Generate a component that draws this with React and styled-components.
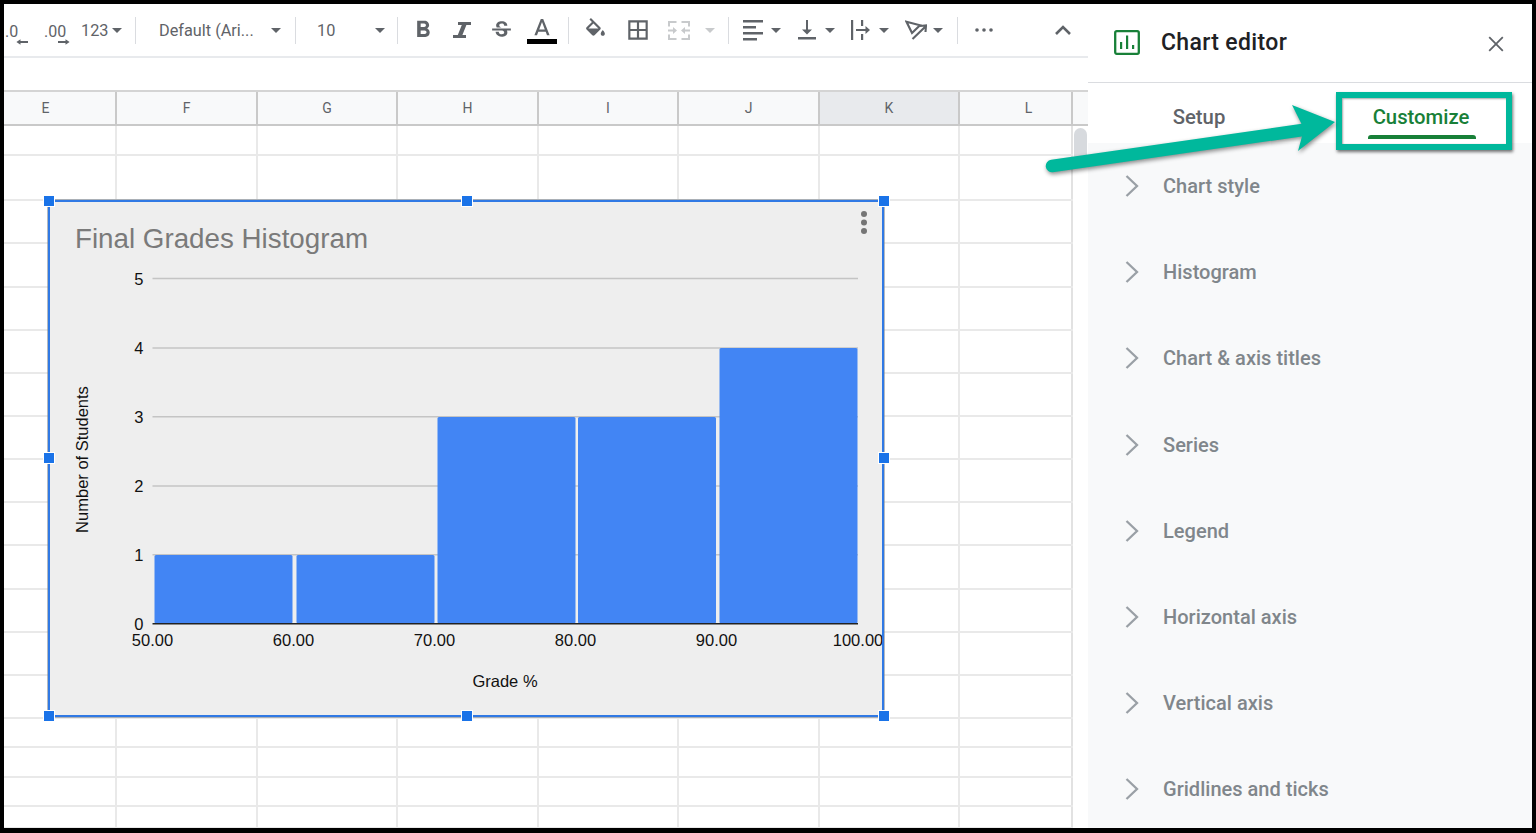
import React from 'react';
import styled, { createGlobalStyle } from 'styled-components';

const Global = createGlobalStyle`
  html, body { margin: 0; padding: 0; background: #000; }
  * { box-sizing: border-box; }
`;

const Frame = styled.div`
  position: relative;
  width: 1536px;
  height: 833px;
  padding: 4px 4px 5px 4px;
  background: #000;
  overflow: hidden;
`;
const Window = styled.div`
  display: flex;
  width: 100%;
  height: 100%;
  background: #fff;
  overflow: hidden;
`;
const Sheet = styled.div`
  flex: 0 0 1084px;
  display: flex;
  flex-direction: column;
  min-width: 0;
`;
const Toolbar = styled.div`
  flex: 0 0 54px;
  display: flex;
  align-items: center;
  border-bottom: 2px solid #e8eaed;
  color: #5f6368;
  font-family: Roboto, "Liberation Sans", sans-serif;
`;
const Slot = styled.div`
  flex: 0 0 ${p => p.$w}px;
  height: 36px;
  margin-left: ${p => p.$ml || 0}px;
  padding-left: ${p => p.$pl || 0}px;
  padding-right: ${p => p.$pr || 0}px;
  display: flex;
  align-items: center;
  justify-content: ${p => (p.$center ? 'center' : 'flex-start')};
  font-size: 16.3px;
  color: #5f6368;
  svg { display: block; flex: none; fill: currentColor; }
`;
const DecText = styled.text`
  font-family: Roboto, "Liberation Sans", sans-serif;
  font-size: 16px;
  fill: #5f6368;
`;
const Separator = styled.div`
  flex: 0 0 1px;
  height: 27px;
  background: #dadce0;
`;
const Caret = styled.span`
  flex: none;
  width: 0;
  height: 0;
  margin-left: ${p => (p.$push ? 'auto' : `${p.$ml || 0}px`)};
  border-left: 5.5px solid transparent;
  border-right: 5.5px solid transparent;
  border-top: 5.5px solid ${p => (p.$muted ? '#c8cacc' : '#5f6368')};
`;
const Swatch = styled.span`
  display: block;
  width: 30px;
  height: 5px;
  background: #000;
  margin-top: 0;
`;
const ColorTool = styled.div`
  display: flex;
  flex-direction: column;
  align-items: center;
`;
const FormulaBar = styled.div`
  flex: 0 0 34px;
  border-bottom: 2px solid #d4d4d4;
`;
const Header = styled.div`
  flex: 0 0 34px;
  display: flex;
  background: #f8f9fa;
  border-bottom: 2px solid #c9c9c9;
`;
const HeadCell = styled.div`
  flex: 0 0 ${p => p.$w}px;
  display: flex;
  align-items: center;
  justify-content: center;
  padding-left: ${p => p.$pl || 0}px;
  padding-right: ${p => p.$pr || 0}px;
  border-right: 2px solid #c9c9c9;
  background: ${p => (p.$active ? '#e8eaed' : 'transparent')};
  color: #5f6368;
  font: 400 14px Roboto, "Liberation Sans", sans-serif;
`;
const Body = styled.div`
  position: relative;
  flex: 1;
  display: flex;
  min-height: 0;
  overflow: hidden;
`;
const Cells = styled.div`
  flex: 0 0 1069px;
  display: flex;
  flex-direction: column;
`;
const Row = styled.div`
  flex: 0 0 ${p => p.$h}px;
  display: flex;
  border-bottom: 2px solid #e9e9e9;
`;
const Cell = styled.div`
  flex: 0 0 ${p => p.$w}px;
  border-right: 2px solid ${p => (p.$last ? '#e2e2e2' : '#e9e9e9')};
`;
const Gutter = styled.div`
  flex: 1;
  padding: 2px 1px 0 1px;
`;
const Thumb = styled.div`
  width: 13px;
  height: 34px;
  border-radius: 7px;
  background: #d7dade;
`;
const Chart = styled.div`
  position: absolute;
  left: 44px;
  top: 74px;
  width: 836px;
  height: 517px;
  border: 2px solid #3079e4;
  box-shadow: 0 0 0 1px rgba(120, 130, 140, .55);
  background: #eee;
  svg { display: block; }
`;
const Handle = styled.span`
  position: absolute;
  left: ${p => p.$x}px;
  top: ${p => p.$y}px;
  width: 12px;
  height: 12px;
  transform: translate(-50%, -50%);
  background: #1a73e8;
  border: 1px solid #fff;
`;
const ChartTitle = styled.text`
  font-family: "Liberation Sans", Arial, sans-serif;
  font-size: 27.75px;
  fill: #7a7a7a;
`;
const AxisText = styled.text`
  font-family: "Liberation Sans", Arial, sans-serif;
  font-size: 16.5px;
  fill: #111;
  text-anchor: ${p => p.$anchor || 'middle'};
`;
const Panel = styled.aside`
  flex: 1;
  display: flex;
  flex-direction: column;
  background: #fff;
  min-width: 0;
`;
const PanelHead = styled.div`
  flex: 0 0 79px;
  display: flex;
  align-items: center;
  padding: 0 28px 2px 26px;
  border-bottom: 1px solid #dadce0;
`;
const PanelTitle = styled.div`
  margin-left: 21px;
  font: 500 23px Roboto, "Liberation Sans", sans-serif;
  letter-spacing: .35px;
  color: #202124;
`;
const Close = styled.div`
  margin-left: auto;
  height: 16px;
  position: relative;
  top: 2px;
  svg { display: block; }
`;
const Tabs = styled.div`
  flex: 0 0 60px;
  display: grid;
  grid-template-columns: 1fr 1fr;
`;
const Tab = styled.div`
  position: relative;
  display: flex;
  align-items: center;
  justify-content: center;
  padding-top: 8px;
  font: 500 20.3px Roboto, "Liberation Sans", sans-serif;
  color: ${p => (p.$active ? '#188038' : '#5f6368')};
  ${p => p.$active && `
    &::after {
      content: '';
      position: absolute;
      left: 58px;
      right: 56px;
      bottom: 4px;
      height: 4px;
      border-radius: 3px 3px 0 0;
      background: #188038;
    }
  `}
`;
const Sections = styled.div`
  flex: 1;
  background: #f8f9fa;
  overflow: hidden;
`;
const Section = styled.div`
  height: 86.2px;
  display: flex;
  align-items: center;
  padding-left: 37px;
  svg { display: block; flex: none; }
`;
const SectionLabel = styled.span`
  margin-left: 24px;
  font: 500 20px Roboto, "Liberation Sans", sans-serif;
  letter-spacing: .02px;
  color: #80868b;
`;
const Callout = styled.div`
  position: absolute;
  left: 1336px;
  top: 92px;
  width: 176px;
  height: 58px;
  border: 6px solid #00b89c;
  box-shadow: 1px 2px 3px rgba(0, 0, 0, .55), inset 1px 1px 2px rgba(0, 0, 0, .35);
`;
const Arrow = styled.svg`
  position: absolute;
  left: 1040px;
  top: 95px;
  overflow: visible;
  filter: drop-shadow(1px 2px 2px rgba(0, 0, 0, .45));
`;

const cols = [
  ['E', 113, 0, 28], ['F', 141], ['G', 140], ['H', 141],
  ['I', 140], ['J', 141], ['K', 140], ['L', 113, 26, 0],
];
const rows = [30, 45, 43, 44, 43, 43, 43, 43, 43, 43, 44, 43, 43, 43, 29, 30, 29, 22];
const sections = ['Chart style', 'Histogram', 'Chart & axis titles', 'Series', 'Legend', 'Horizontal axis', 'Vertical axis', 'Gridlines and ticks'];
const handles = [[-1, -1], [417, -1], [834, -1], [-1, 256], [834, 256], [-1, 514], [417, 514], [834, 514]];
const bars = [[154.5, 138, 555], [296.5, 138, 555], [437.5, 138, 417], [578, 138, 417], [719.5, 138, 348]];
const gridY = [[5, 278.5], [4, 348], [3, 416.7], [2, 486], [1, 554.8]];
const xLabels = [['50.00', 152.5], ['60.00', 293.5], ['70.00', 434.5], ['80.00', 575.5], ['90.00', 716.5], ['100.00', 858]];

const Icon = ({ w, h, vb, d }) => (
  <svg width={w} height={h} viewBox={vb || '0 0 24 24'}><path d={d} /></svg>
);

const DecDown = () => (
  <svg width="30" height="36" viewBox="0 0 30 36">
    <DecText x="1" y="25">.0</DecText>
    <path d="M24 29.1H16.5V27.2L12.4 30 16.5 32.8V30.9H24z" />
  </svg>
);
const DecUp = () => (
  <svg width="40" height="36" viewBox="0 0 40 36">
    <DecText x="10" y="25">.00</DecText>
    <path d="M24 29.1H31.5V27.2L35.6 30 31.5 32.8V30.9H24z" />
  </svg>
);
const Merge = () => (
  <svg width="22" height="19" viewBox="0 0 22 19" style={{ fill: '#c8cacc' }}>
    <path d="M0 0h8.5v2H2v3.5H0zM13.5 0H22v5.5h-2V2h-6.5zM0 13.5h2V17h6.5v2H0zM20 13.5h2V19h-8.5v-2H20z" />
    <path d="M0 8.5h5V6l4 3.5-4 3.5v-2.5H0zM22 8.5h-5V6l-4 3.5 4 3.5v-2.5h5z" />
  </svg>
);
const AlignLeft = () => (
  <svg width="20" height="21" viewBox="0 0 20 21">
    <path d="M0 0h20v2.5H0zM0 6h13v2.5H0zM0 12h20v2.5H0zM0 18h14v2.5H0z" />
  </svg>
);
const VAlign = () => (
  <svg width="18" height="20" viewBox="0 0 18 20">
    <path d="M0 17h18v2.5H0zM8 0h2v9.5h4L9 14.5 4 9.5h4z" />
  </svg>
);
const Wrap = () => (
  <svg width="19" height="20" viewBox="0 0 19 20">
    <path d="M0 0h2.2v20H0zM10 0h2.2v6H10zM10 14h2.2v6H10zM5 9h9.5V6l4.5 4-4.5 4v-3H5z" />
  </svg>
);
const Rotate = () => (
  <svg width="22" height="20" viewBox="0 0 22 20" style={{ fill: 'none', stroke: '#5f6368', strokeWidth: 2.1 }}>
    <path d="M1.5 1.8 15 5.2 7 13z" />
    <path d="M7.5 19 20.5 6.5M15 6 21 5.5 20.5 12" />
  </svg>
);
const More = () => (
  <svg width="18" height="6" viewBox="0 0 18 6">
    <circle cx="2" cy="3" r="1.8" /><circle cx="9" cy="3" r="1.8" /><circle cx="16" cy="3" r="1.8" />
  </svg>
);
const ChevronUp = () => (
  <svg width="16" height="10" viewBox="0 0 16 10" style={{ fill: 'none', stroke: '#5f6368', strokeWidth: 2.6 }}>
    <path d="M1 9 8 2l7 7" />
  </svg>
);
const ChartIcon = () => (
  <svg width="26" height="25" viewBox="0 0 26 25" style={{ display: 'block', flex: 'none' }}>
    <rect x="1.2" y="1.2" width="23.6" height="22.6" rx="1.5" fill="none" stroke="#188038" strokeWidth="2.3" />
    <path fill="#188038" d="M6 12h2.2v7H6zM12 5.5h2.2V19H12zM18 15h2.2v4H18z" />
  </svg>
);
const CloseIcon = () => (
  <svg width="16" height="16" viewBox="0 0 16 16" fill="none" stroke="#5f6368" strokeWidth="1.8">
    <path d="M1.2 1.2l13.6 13.6M14.8 1.2 1.2 14.8" />
  </svg>
);
const Chevron = () => (
  <svg width="14" height="24" viewBox="0 0 14 24" fill="none" stroke="#9aa0a6" strokeWidth="2.3">
    <path d="M1.5 2l10.5 10L1.5 22" />
  </svg>
);

const HistogramPlot = () => (
  <svg width="832" height="513" viewBox="50 202 832 513">
    <ChartTitle x="75" y="248">Final Grades Histogram</ChartTitle>
    <g fill="#757575">
      <circle cx="864" cy="214" r="3" />
      <circle cx="864" cy="222.5" r="3" />
      <circle cx="864" cy="231" r="3" />
    </g>
    {gridY.map(([n, y]) => (
      <g key={n}>
        <line x1="152.5" x2="858" y1={y} y2={y} stroke="#c4c4c4" strokeWidth="1.5" />
        <AxisText $anchor="end" x="143.5" y={y + 6}>{n}</AxisText>
      </g>
    ))}
    <AxisText $anchor="end" x="143.5" y="629.5">0</AxisText>
    {bars.map(([x, w, y]) => (
      <rect key={x} x={x} y={y} width={w} height={623.5 - y} rx="1.5" fill="#4285f4" />
    ))}
    <line x1="152.5" x2="858" y1="623.7" y2="623.7" stroke="#222" strokeWidth="1.5" />
    {xLabels.map(([t, x]) => <AxisText key={t} x={x} y="645.5">{t}</AxisText>)}
    <AxisText x="505" y="687">Grade %</AxisText>
    <AxisText transform="translate(88 459.5) rotate(-90)">Number of Students</AxisText>
  </svg>
);

export default function App() {
  return (
    <Frame>
      <Global />
      <Window>
        <Sheet>
          <Toolbar>
            <Slot $w={30}><DecDown /></Slot>
            <Slot $w={40}><DecUp /></Slot>
            <Slot $w={61} $pl={7}>123<Caret $ml={4} /></Slot>
            <Separator />
            <Slot $w={159} $pl={23} $pr={14}>Default (Ari...<Caret $push /></Slot>
            <Separator />
            <Slot $w={101} $pl={21} $pr={12}>10<Caret $push /></Slot>
            <Separator />
            <Slot $ml={5} $w={39} $center><Icon w={28} h={28} d="M15.6 10.79c.97-.67 1.65-1.77 1.65-2.79 0-2.26-1.75-4-4-4H7v14h7.04c2.09 0 3.71-1.7 3.71-3.79 0-1.52-.86-2.82-2.15-3.42zM10 6.5h3c.83 0 1.5.67 1.5 1.5s-.67 1.5-1.5 1.5h-3v-3zm3.5 9H10v-3h3.5c.83 0 1.5.67 1.5 1.5s-.67 1.5-1.5 1.5z" /></Slot>
            <Slot $w={39} $center><Icon w={18} h={16} vb="0 0 18 16" d="M5 0h13v3h-4.6L9.4 13H13v3H0v-3h4.8L8.8 3H5z" /></Slot>
            <Slot $w={41} $center><Icon w={25} h={25} d="M6.85 7.08C6.85 4.37 9.45 3 12.24 3c1.64 0 3 .49 3.9 1.28.77.65 1.46 1.73 1.46 3.24h-3.01c0-.31-.05-.59-.15-.85-.29-.86-1.2-1.28-2.25-1.28-1.86 0-2.34 1.02-2.34 1.7 0 .48.25.88.74 1.21.38.25.77.48 1.41.7H7.39c-.21-.34-.54-.89-.54-1.92zM21 12v-2H3v2h9.62c1.15.45 1.96.75 1.96 1.97 0 1-.81 1.67-2.28 1.67-1.54 0-2.93-.54-2.93-2.51H6.4c0 .55.08 1.13.24 1.58.81 2.29 3.29 3.3 5.67 3.3 2.27 0 5.3-.89 5.3-4.05 0-.3-.01-1.16-.48-1.94H21V12z" /></Slot>
            <Slot $w={40} $center>
              <ColorTool>
                <Icon w={28} h={22} vb="0 1.5 28 22" d="M12.8 3.5 6.4 19.8h2.6l1.3-3.5h7.4l1.3 3.5h2.6L15.2 3.5h-2.4zm-1.6 10.5L14 6.6l2.8 7.4h-5.6z" />
                <Swatch />
              </ColorTool>
            </Slot>
            <Slot $w={6} />
            <Separator />
            <Slot $w={53} $center><Icon w={25} h={25} d="M16.56 8.94L7.62 0 6.21 1.41l2.38 2.38-5.15 5.15c-.59.59-.59 1.54 0 2.12l5.5 5.5c.29.29.68.44 1.06.44s.77-.15 1.06-.44l5.5-5.5c.59-.58.59-1.53 0-2.12zM5.21 10L10 5.21 14.79 10H5.21zM19 11.5s-2 2.17-2 3.5c0 1.1.9 2 2 2s2-.9 2-2c0-1.33-2-3.5-2-3.5z" /></Slot>
            <Slot $w={31} $center><Icon w={26} h={26} d="M3 3v18h18V3H3zm8 16H5v-6h6v6zm0-8H5V5h6v6zm8 8h-6v-6h6v6zm0-8h-6V5h6v6z" /></Slot>
            <Slot $w={52} $center><Merge /></Slot>
            <Slot $w={23}><Caret $muted /></Slot>
            <Separator />
            <Slot $w={61} $pl={14}><AlignLeft /><Caret $ml={8} /></Slot>
            <Slot $w={45} $pl={8}><VAlign /><Caret $ml={9} /></Slot>
            <Slot $w={54} $pl={16}><Wrap /><Caret $ml={9} /></Slot>
            <Slot $w={68} $pl={16}><Rotate /><Caret $ml={6} /></Slot>
            <Separator />
            <Slot $w={52} $center><More /></Slot>
            <Slot $w={78} $pl={45}><ChevronUp /></Slot>
          </Toolbar>
          <FormulaBar />
          <Header>
            {cols.map(([c, w, pl, pr]) => <HeadCell key={c} $w={w} $pl={pl} $pr={pr} $active={c === 'K'}>{c}</HeadCell>)}
          </Header>
          <Body>
            <Cells>
              {rows.map((h, i) => (
                <Row key={i} $h={h}>
                  {cols.map(([c, w]) => <Cell key={c} $w={w} $last={c === 'L'} />)}
                </Row>
              ))}
            </Cells>
            <Gutter><Thumb /></Gutter>
            <Chart>
              <HistogramPlot />
              {handles.map(([x, y]) => <Handle key={`${x}-${y}`} $x={x} $y={y} />)}
            </Chart>
          </Body>
        </Sheet>
        <Panel>
          <PanelHead>
            <ChartIcon />
            <PanelTitle>Chart editor</PanelTitle>
            <Close><CloseIcon /></Close>
          </PanelHead>
          <Tabs>
            <Tab>Setup</Tab>
            <Tab $active>Customize</Tab>
          </Tabs>
          <Sections>
            {sections.map(s => (
              <Section key={s}>
                <Chevron />
                <SectionLabel>{s}</SectionLabel>
              </Section>
            ))}
          </Sections>
        </Panel>
      </Window>
      <Callout />
      <Arrow width="300" height="85" viewBox="1040 95 300 85">
        <line x1="1052" y1="166" x2="1306" y2="129.5" stroke="#00b89c" strokeWidth="12.5" strokeLinecap="round" />
        <path d="M1335 122 1292 105 1304 129 1298 151z" fill="#00b89c" />
      </Arrow>
    </Frame>
  );
}
